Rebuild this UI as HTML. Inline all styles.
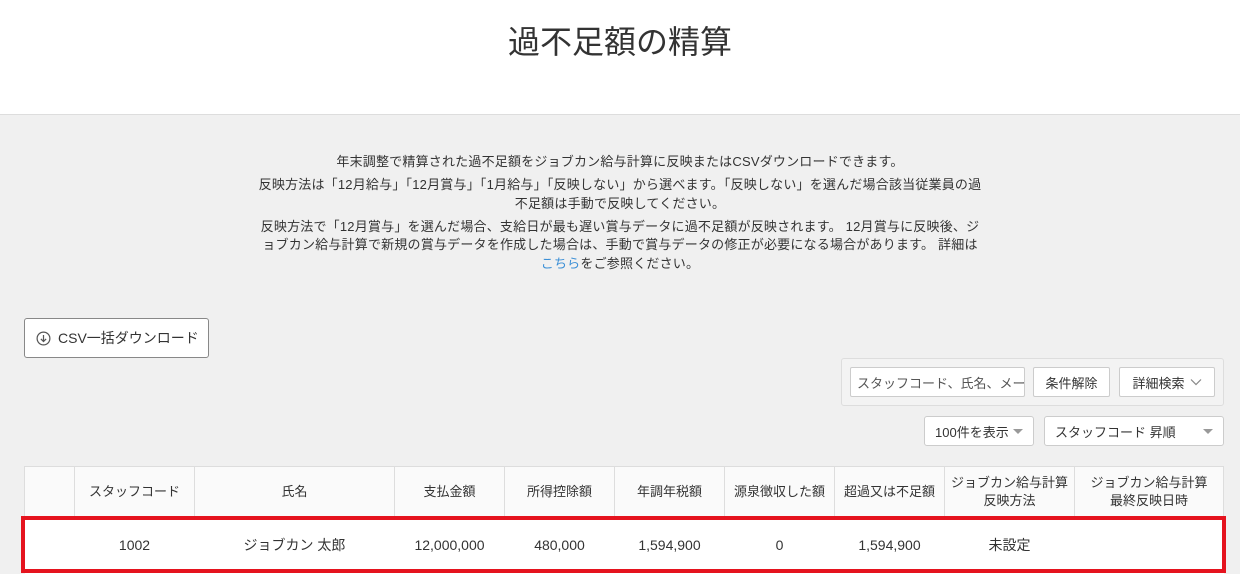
<!DOCTYPE html>
<html><head><meta charset="utf-8"><style>
*{box-sizing:border-box;margin:0;padding:0}
body{width:1240px;height:573px;overflow:hidden;background:#f0f0f0;font-family:"Liberation Sans","Noto Sans CJK JP",sans-serif;color:#333;position:relative}
.hd{position:absolute;left:0;top:0;width:1240px;height:115px;background:#fff;border-bottom:1px solid #ddd}
.hd h1{position:absolute;top:20px;width:100%;text-align:center;font-size:32px;font-weight:normal;color:#333;line-height:44px}
.p{position:absolute;top:153px;left:0;width:1240px;text-align:center;font-size:13px;line-height:18.5px;color:#333;letter-spacing:0.2px}
.p div{margin-bottom:4.5px}
a{color:#3b8fd6;text-decoration:none}
.btn{position:absolute;background:#fff;border:1px solid #888;border-radius:3px;font-size:13px;color:#333;display:flex;align-items:center}
.csv{left:24px;top:318px;width:185px;height:40px;padding-left:11px;font-size:14px}
.csv svg{margin-right:7px}
.fbox{position:absolute;left:841px;top:358px;width:383px;height:48px;border:1px solid #ddd;border-radius:3px;background:#f3f3f3}
.in{position:absolute;top:8px;height:30px;background:#fff;border:1px solid #ccc;border-radius:2px;font-size:13px;display:flex;align-items:center;justify-content:center;color:#333}
.sel{position:absolute;top:416px;height:30px;background:#fff;border:1px solid #ccc;border-radius:3px;font-size:13px;display:flex;align-items:center;padding-left:10px}
.tri{position:absolute;right:10px;top:12px;width:0;height:0;border-left:5px solid transparent;border-right:5px solid transparent;border-top:5px solid #999}
table{position:absolute;left:24px;top:466px;border-collapse:collapse;font-size:13px;table-layout:fixed}
th{background:#fafafa;font-weight:normal;height:50px;border-left:1px solid #ddd;border-top:1px solid #ddd;line-height:18px;color:#333}
th:last-child{border-right:1px solid #ddd}
td{background:#fff;height:57px;text-align:center;font-size:14px}
.red{position:absolute;left:21px;top:516px;width:1205px;height:57px;border:4px solid #e5131e}
</style></head><body>
<div class="hd"><h1>過不足額の精算</h1></div>
<div class="p">
<div>年末調整で精算された過不足額をジョブカン給与計算に反映またはCSVダウンロードできます。</div>
<div>反映方法は「12月給与」「12月賞与」「1月給与」「反映しない」から選べます。「反映しない」を選んだ場合該当従業員の過<br>不足額は手動で反映してください。</div>
<div>反映方法で「12月賞与」を選んだ場合、支給日が最も遅い賞与データに過不足額が反映されます。 12月賞与に反映後、ジ<br>ョブカン給与計算で新規の賞与データを作成した場合は、手動で賞与データの修正が必要になる場合があります。 詳細は<br><a>こちら</a>をご参照ください。</div>
</div>
<div class="btn csv"><svg width="15" height="15" viewBox="0 0 16 16"><circle cx="8" cy="8" r="6.8" fill="none" stroke="#555" stroke-width="1.3"/><path d="M8 4.2v7M5.2 8.5 8 11.2l2.8-2.7" fill="none" stroke="#555" stroke-width="1.3"/></svg>CSV一括ダウンロード</div>
<div class="fbox">
<div class="in" style="left:8px;width:175px;justify-content:flex-start;padding-left:6px;overflow:hidden;white-space:nowrap;color:#555">スタッフコード、氏名、メール</div>
<div class="in" style="left:191px;width:77px">条件解除</div>
<div class="in" style="left:277px;width:96px">詳細検索 <svg width="12" height="8" viewBox="0 0 12 8" style="margin-left:5px"><path d="M1 1.5 6 6.5 11 1.5" fill="none" stroke="#888" stroke-width="1.2"/></svg></div>
</div>
<div class="sel" style="left:924px;width:110px">100件を表示<span class="tri"></span></div>
<div class="sel" style="left:1044px;width:180px">スタッフコード 昇順<span class="tri"></span></div>
<table>
<colgroup><col style="width:50px"><col style="width:120px"><col style="width:200px"><col style="width:110px"><col style="width:110px"><col style="width:110px"><col style="width:110px"><col style="width:110px"><col style="width:130px"><col style="width:149px"></colgroup>
<tr><th style="border-left:1px solid #ddd"></th><th>スタッフコード</th><th>氏名</th><th>支払金額</th><th>所得控除額</th><th>年調年税額</th><th>源泉徴収した額</th><th>超過又は不足額</th><th>ジョブカン給与計算<br>反映方法</th><th>ジョブカン給与計算<br>最終反映日時</th></tr>
<tr><td></td><td>1002</td><td>ジョブカン 太郎</td><td>12,000,000</td><td>480,000</td><td>1,594,900</td><td>0</td><td>1,594,900</td><td>未設定</td><td></td></tr>
</table>
<div class="red"></div>
</body></html>
